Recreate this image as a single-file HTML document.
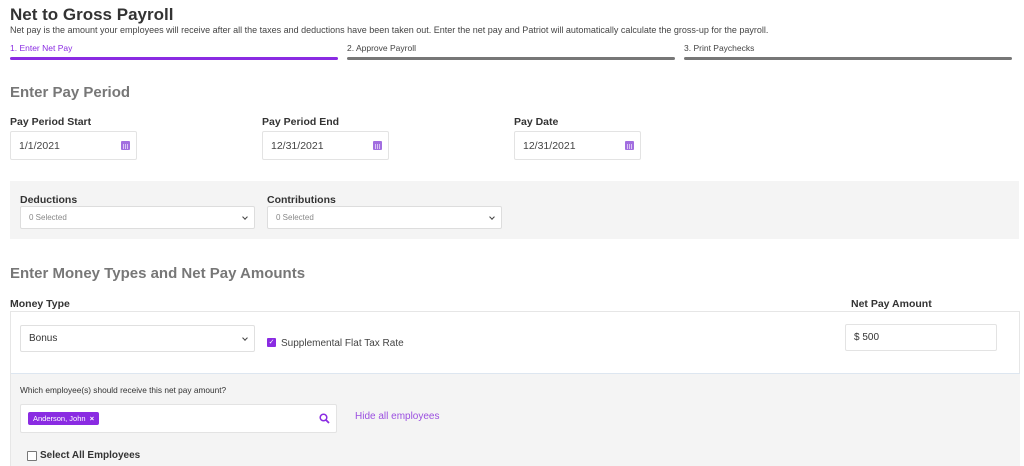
<!DOCTYPE html>
<html><head><style>
*{box-sizing:border-box;margin:0;padding:0}
body{width:1024px;height:466px;overflow:hidden;background:#fff;font-family:"Liberation Sans",Arial,sans-serif;color:#333;position:relative}
.a{position:absolute}
.lbl{font-size:10.5px;font-weight:bold;color:#333}
.inp{position:absolute;background:#fff;border:1px solid #e3e3e3;border-radius:2px;font-size:10.5px;color:#444;padding-left:8px;display:flex;align-items:center}
.cal{position:absolute;right:6px;top:50%;margin-top:-5px;width:9px;height:9px;background:#a26ee0;border-radius:1px}
.cal:before{content:"";position:absolute;left:1px;right:1px;top:3px;bottom:1px;background:repeating-linear-gradient(90deg,#a26ee0 0 1px,#d9c4f3 1px 2px)}
.sel{position:absolute;background:#fff;border:1px solid #ddd;border-radius:2px;font-size:8px;color:#888;padding-left:8px;display:flex;align-items:center}
.sel:after{content:"";position:absolute;right:7px;top:50%;margin-top:-3px;width:3px;height:3px;border-right:1px solid #444;border-bottom:1px solid #444;transform:rotate(45deg)}
.bar{position:absolute;top:57px;height:3px;width:328px;background:#777;border-radius:2px}
.st{position:absolute;top:43px;font-size:8.5px;color:#444}
</style></head><body>
<div class="a" style="left:10px;top:5px;font-size:17px;font-weight:bold;color:#333">Net to Gross Payroll</div>
<div class="a" style="left:10px;top:25px;font-size:9px;color:#444;white-space:nowrap">Net pay is the amount your employees will receive after all the taxes and deductions have been taken out. Enter the net pay and Patriot will automatically calculate the gross-up for the payroll.</div>
<div class="st" style="left:10px;color:#8a2be2">1. Enter Net Pay</div>
<div class="st" style="left:347px">2. Approve Payroll</div>
<div class="st" style="left:684px">3. Print Paychecks</div>
<div class="bar" style="left:10px;background:#8a2be2"></div>
<div class="bar" style="left:347px"></div>
<div class="bar" style="left:684px"></div>

<div class="a" style="left:10px;top:84px;font-size:15px;font-weight:bold;color:#777">Enter Pay Period</div>
<div class="a lbl" style="left:10px;top:116px">Pay Period Start</div>
<div class="a lbl" style="left:262px;top:116px">Pay Period End</div>
<div class="a lbl" style="left:514px;top:116px">Pay Date</div>
<div class="inp" style="left:10px;top:131px;width:127px;height:29px">1/1/2021<span class="cal"></span></div>
<div class="inp" style="left:262px;top:131px;width:127px;height:29px">12/31/2021<span class="cal"></span></div>
<div class="inp" style="left:514px;top:131px;width:127px;height:29px">12/31/2021<span class="cal"></span></div>

<div class="a" style="left:10px;top:181px;width:1009px;height:58px;background:#f4f4f4"></div>
<div class="a lbl" style="left:20px;top:194px">Deductions</div>
<div class="a lbl" style="left:267px;top:194px">Contributions</div>
<div class="sel" style="left:20px;top:206px;width:235px;height:23px">0 Selected</div>
<div class="sel" style="left:267px;top:206px;width:235px;height:23px">0 Selected</div>

<div class="a" style="left:10px;top:265px;font-size:15px;font-weight:bold;color:#777">Enter Money Types and Net Pay Amounts</div>
<div class="a lbl" style="left:10px;top:298px">Money Type</div>
<div class="a lbl" style="left:851px;top:298px">Net Pay Amount</div>

<div class="a" style="left:10px;top:311px;width:1010px;height:155px;border:1px solid #e6e6e6;border-bottom:none"></div>
<div class="a" style="left:11px;top:373px;width:1009px;height:93px;background:#f4f4f4;border-top:1px solid #dde6f0"></div>
<div class="sel" style="left:20px;top:325px;width:235px;height:27px;font-size:10px;color:#333;border-color:#e0e0e0">Bonus</div>
<div class="a" style="left:267px;top:338px;width:9px;height:9px;background:#8a2be2;border-radius:1px;color:#fff;font-size:7px;line-height:9px;text-align:center">✓</div>
<div class="a" style="left:281px;top:338px;font-size:10px;color:#444">Supplemental Flat Tax Rate</div>
<div class="inp" style="left:845px;top:324px;width:152px;height:27px;font-size:10px;color:#333">$ 500</div>

<div class="a" style="left:20px;top:385px;font-size:8.3px;color:#333">Which employee(s) should receive this net pay amount?</div>
<div class="inp" style="left:20px;top:404px;width:317px;height:29px;padding-left:7px">
<span style="background:#8a2be2;color:#fff;font-size:7.5px;border-radius:2px;padding:2px 5px;">Anderson, John &nbsp;<b>×</b></span>
<svg class="a" style="right:6px;top:8px" width="11" height="11" viewBox="0 0 11 11"><circle cx="4.5" cy="4.5" r="3.3" stroke="#8a2be2" stroke-width="1.5" fill="none"/><path d="M7 7L10 10" stroke="#8a2be2" stroke-width="1.8"/></svg>
</div>
<div class="a" style="left:355px;top:411px;font-size:10px;color:#9b4fe0">Hide all employees</div>
<div class="a" style="left:27px;top:451px;width:10px;height:10px;border:1px solid #777;background:#fff;border-radius:1px"></div>
<div class="a" style="left:40px;top:450px;font-size:10px;font-weight:bold;color:#333">Select All Employees</div>
</body></html>
